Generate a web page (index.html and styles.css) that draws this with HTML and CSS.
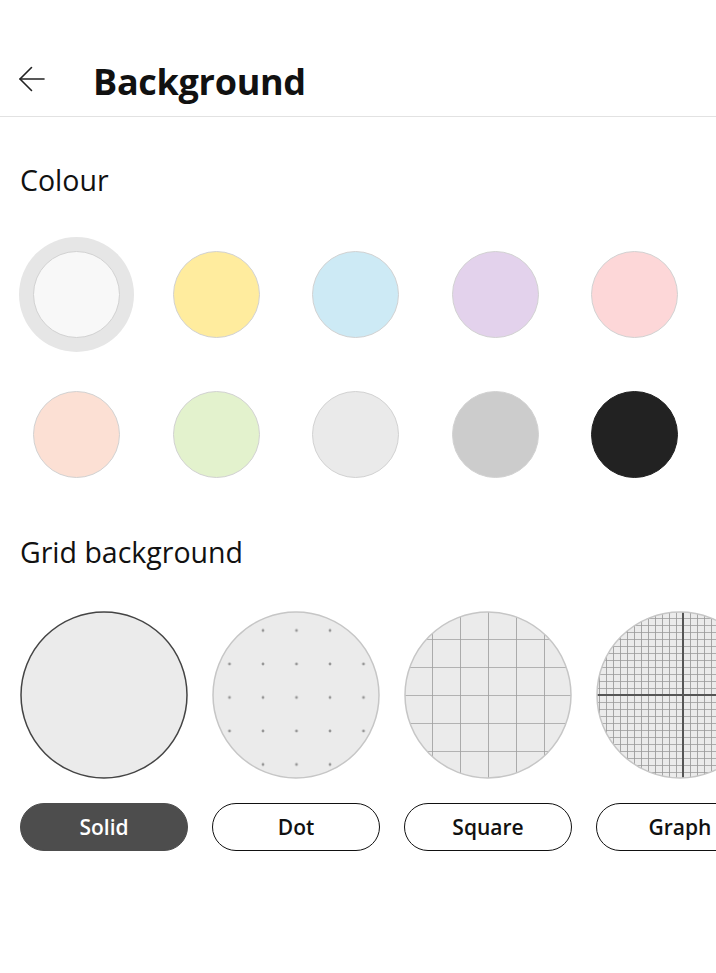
FILE: index.html
```html
<!DOCTYPE html>
<html lang="en">
<head>
<meta charset="utf-8">
<title>Background</title>
<link rel="stylesheet" href="styles.css">
</head>
<body>
<div class="page">
  <header class="topbar">
    <button class="back" aria-label="Back">
      <svg width="28" height="28" viewBox="0 0 28 28" fill="none" stroke="#222" stroke-width="1.6" stroke-linecap="round" stroke-linejoin="round">
        <path d="M2 14 H26"/>
        <path d="M13.5 2.5 L2 14 L13.5 25.5"/>
      </svg>
    </button>
    <h1 class="title">Background</h1>
  </header>

  <section class="section">
    <h2 class="heading">Colour</h2>
    <div class="swatches">
      <div class="cell"><span class="swatch selected" style="background:#f8f8f8"></span></div>
      <div class="cell"><span class="swatch" style="background:#ffec9e"></span></div>
      <div class="cell"><span class="swatch" style="background:#cdeaf5"></span></div>
      <div class="cell"><span class="swatch" style="background:#e3d2ec"></span></div>
      <div class="cell"><span class="swatch" style="background:#fdd7d8"></span></div>
      <div class="cell"><span class="swatch" style="background:#fce0d4"></span></div>
      <div class="cell"><span class="swatch" style="background:#e3f2cd"></span></div>
      <div class="cell"><span class="swatch" style="background:#eaeaea"></span></div>
      <div class="cell"><span class="swatch" style="background:#cccccc"></span></div>
      <div class="cell"><span class="swatch dark" style="background:#222222"></span></div>
    </div>
  </section>

  <section class="section grid-section">
    <h2 class="heading">Grid background</h2>
    <div class="patterns">
      <div class="pattern">
        <svg class="disc" viewBox="0 0 168 168" width="168" height="168">
          <circle cx="84" cy="84" r="83" fill="#ebebeb" stroke="#444" stroke-width="1.5"/>
        </svg>
        <button class="pill active">Solid</button>
      </div>
      <div class="pattern">
        <svg class="disc" viewBox="0 0 168 168" width="168" height="168">
          <defs>
            <clipPath id="c2"><circle cx="84" cy="84" r="83"/></clipPath>
            <pattern id="dots" x="0.75" y="2.75" width="33.5" height="33.5" patternUnits="userSpaceOnUse">
              <circle cx="16.75" cy="16.75" r="1.4" fill="#969696"/>
            </pattern>
          </defs>
          <circle cx="84" cy="84" r="83" fill="#ebebeb"/>
          <rect x="0" y="0" width="168" height="168" fill="url(#dots)" clip-path="url(#c2)"/>
          <circle cx="84" cy="84" r="83" fill="none" stroke="#c6c6c6" stroke-width="1.5"/>
        </svg>
        <button class="pill">Dot</button>
      </div>
      <div class="pattern">
        <svg class="disc" viewBox="0 0 168 168" width="168" height="168">
          <defs>
            <clipPath id="c3"><circle cx="84" cy="84" r="83"/></clipPath>
            <pattern id="sq" x="0" y="0" width="28" height="28" patternUnits="userSpaceOnUse">
              <path d="M0 0 H28 M0 0 V28" stroke="#a0a0a0" stroke-width="1.7" fill="none"/>
            </pattern>
          </defs>
          <circle cx="84" cy="84" r="83" fill="#ebebeb"/>
          <rect x="0" y="0" width="168" height="168" fill="url(#sq)" clip-path="url(#c3)"/>
          <circle cx="84" cy="84" r="83" fill="none" stroke="#c6c6c6" stroke-width="1.5"/>
        </svg>
        <button class="pill">Square</button>
      </div>
      <div class="pattern">
        <svg class="disc" viewBox="0 0 168 168" width="168" height="168">
          <defs>
            <clipPath id="c4"><circle cx="84" cy="84" r="83"/></clipPath>
            <pattern id="gr" x="3" y="0" width="7" height="7" patternUnits="userSpaceOnUse">
              <path d="M0 0 H7 M0 0 V7" stroke="#999999" stroke-width="1.7" fill="none"/>
            </pattern>
          </defs>
          <circle cx="84" cy="84" r="83" fill="#ebebeb"/>
          <rect x="0" y="0" width="168" height="168" fill="url(#gr)" clip-path="url(#c4)"/>
          <path d="M87 0 V168 M0 84 H168" stroke="#555" stroke-width="2" clip-path="url(#c4)"/>
          <circle cx="84" cy="84" r="83" fill="none" stroke="#c6c6c6" stroke-width="1.5"/>
        </svg>
        <button class="pill">Graph</button>
      </div>
    </div>
  </section>
</div>
</body>
</html>
```

FILE: styles.css
```css
* { box-sizing: border-box; }

html, body {
  margin: 0;
  padding: 0;
  background: #ffffff;
  overflow: hidden;
}

body {
  font-family: "Open Sans", "Noto Sans", "Liberation Sans", sans-serif;
  color: #111;
}

.page {
  width: 716px;
  overflow: hidden;
}

.topbar {
  height: 117px;
  display: flex;
  align-items: flex-end;
  padding: 0 0 10px 18px;
  border-bottom: 1px solid #e2e2e2;
}

.back {
  border: 0;
  background: none;
  padding: 0;
  margin: 0 47px 13px 0;
  width: 28px;
  height: 28px;
  display: flex;
}

.title {
  margin: 0;
  font-size: 36px;
  font-weight: 700;
  line-height: 48px;
  letter-spacing: -0.3px;
}

.section {
  padding: 0 0 0 20px;
}

.heading {
  margin: 0;
  font-size: 28.5px;
  font-weight: 400;
  line-height: 36px;
  padding-top: 45px;
}

.swatches {
  display: grid;
  grid-template-columns: repeat(5, 115px);
  column-gap: 24.5px;
  row-gap: 25px;
  margin-top: 39px;
  margin-left: -1px;
}

.cell {
  width: 115px;
  height: 115px;
  display: flex;
  align-items: center;
  justify-content: center;
}

.swatch {
  display: block;
  width: 87px;
  height: 87px;
  border-radius: 50%;
  border: 1px solid #d2d2d2;
}

.swatch.selected {
  box-shadow: 0 0 0 14px #e6e6e6;
}

.swatch.dark {
  border-color: #222;
}

.grid-section .heading {
  padding-top: 42px;
}

.patterns {
  display: flex;
  gap: 24px;
  margin-top: 41px;
}

.pattern {
  flex: 0 0 168px;
  display: flex;
  flex-direction: column;
  gap: 24px;
}

.disc {
  display: block;
}

.pill {
  height: 48px;
  width: 168px;
  border-radius: 24px;
  border: 1.5px solid #111;
  background: #fff;
  color: #111;
  font-family: "Open Sans", "Noto Sans", "Liberation Sans", sans-serif;
  font-size: 21px;
  font-weight: 600;
  padding: 0;
}

.pill.active {
  background: #4d4d4d;
  border-color: #4d4d4d;
  color: #fff;
}
```
